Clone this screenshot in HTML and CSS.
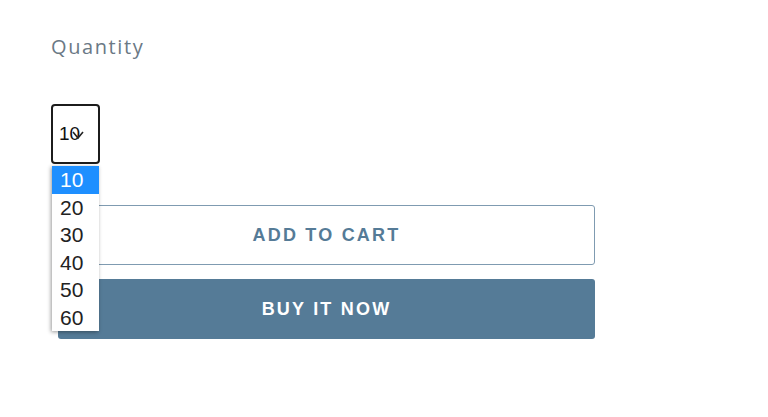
FILE: index.html
```html
<!DOCTYPE html>
<html>
<head>
  <title>Product form</title>
  <link rel="stylesheet" href="styles.css">
</head>
<body>

<div class="product-form">
  <label class="qty-label">Quantity</label>

  <div class="qty-select">
    <div class="select-box">
      <span class="select-value">10</span>
      <svg class="chevron" width="12" height="10" viewBox="0 0 12 10"><path d="M1 2 L6 8 L11 2" fill="none" stroke="#222" stroke-width="1.6"/></svg>
    </div>
    <!-- open option list -->
    <ul class="options">
      <li class="selected">10</li>
      <li>20</li>
      <li>30</li>
      <li>40</li>
      <li>50</li>
      <li>60</li>
    </ul>
  </div>

  <div class="actions">
    <button class="btn btn-outline">Add to cart</button>
    <button class="btn btn-solid">Buy it now</button>
  </div>
</div>

</body>
</html>
```

FILE: styles.css
```css
body {
  margin: 0;
  background: #fff;
  font-family: "Open Sans", "Liberation Sans", sans-serif;
}
.product-form {
  padding: 33px 0 0 51px;
}
.qty-label {
  display: block;
  font-size: 20px;
  color: #6b7985;
  letter-spacing: 1.6px;
  line-height: 28px;
}
.qty-select {
  position: relative;
  margin-top: 43px;
  width: 49px;
}
.select-box {
  box-sizing: border-box;
  width: 49px;
  height: 60px;
  border: 2px solid #1c1c1c;
  border-radius: 4px;
  display: flex;
  align-items: center;
  padding-left: 6px;
  font-family: "Liberation Sans", Arial, sans-serif;
  font-size: 19px;
  color: #111;
}
.chevron {
  margin-left: -8px;
  margin-top: 2px;
}
.options {
  position: absolute;
  top: 62px;
  left: 1px;
  width: 47px;
  margin: 0;
  padding: 0;
  list-style: none;
  background: #fff;
  box-shadow: -1px 1px 4px rgba(0, 0, 0, 0.4);
  font-family: "Liberation Sans", Arial, sans-serif;
  font-size: 21px;
  color: #222;
  z-index: 2;
}
.options li {
  height: 27.5px;
  line-height: 28px;
  padding-left: 8px;
}
.options li.selected {
  background: #1e8fff;
  color: #fff;
}
.actions {
  margin: 41px 0 0 7px;
  width: 537px;
  display: flex;
  flex-direction: column;
  gap: 14px;
}
.btn {
  height: 60px;
  border-radius: 3px;
  font-family: "Liberation Sans", Arial, sans-serif;
  font-weight: bold;
  font-size: 18px;
  letter-spacing: 2.2px;
  text-transform: uppercase;
}
.btn-outline {
  background: #fff;
  color: #557b97;
  border: 1px solid #7f9bb1;
}
.btn-solid {
  background: #557b97;
  color: #fff;
  border: none;
}
```
